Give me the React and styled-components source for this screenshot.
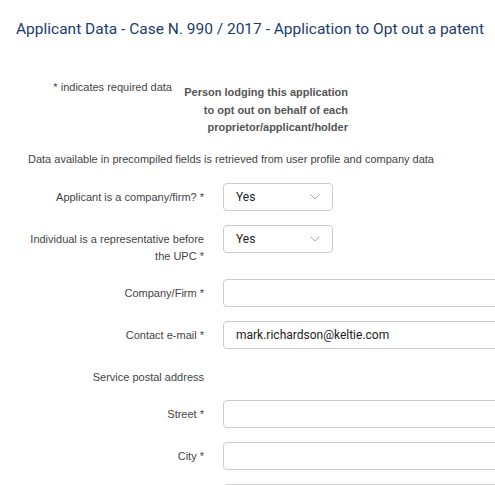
import React from "react";
import styled, { createGlobalStyle } from "styled-components";

const Global = createGlobalStyle`
  html, body {
    margin: 0;
    padding: 0;
    background: #fff;
    overflow: hidden;
  }
  body {
    font-family: "Liberation Sans", Arial, sans-serif;
  }
`;

const Page = styled.div`
  width: 720px;
  padding: 20px 0 0 16px;
`;

const Title = styled.h1`
  margin: 0;
  font-family: Roboto, "Liberation Sans", sans-serif;
  font-weight: 400;
  font-size: 15.5px;
  line-height: 19px;
  color: #1b3c6c;
`;

const Form = styled.div`
  padding: 41px 0 0 12px;
`;

const Intro = styled.div`
  display: flex;
  gap: 12px;
`;

const Note = styled.div`
  width: 144px;
  text-align: right;
  font-size: 11px;
  line-height: 14px;
  color: #444;
`;

const Lodging = styled.div`
  width: 164px;
  padding-top: 4px;
  text-align: right;
  font-size: 11px;
  font-weight: 700;
  line-height: 17.5px;
  color: #555;
`;

const Info = styled.p`
  margin: 15px 0 17px;
  font-size: 11px;
  line-height: 14px;
  color: #444;
`;

const Row = styled.div`
  display: flex;
  align-items: flex-start;
  gap: 19px;
  margin-bottom: 14px;
`;

const Label = styled.label`
  width: 176px;
  flex: none;
  padding-top: 6px;
  text-align: right;
  font-size: 11px;
  line-height: 17px;
  color: #444;
`;

const Field = styled.div`
  box-sizing: border-box;
  height: 28px;
  width: ${(p) => (p.$short ? "110px" : "420px")};
  border: 1px solid #ccc;
  border-radius: 4px;
  background: #fff;
  display: flex;
  align-items: center;
  justify-content: space-between;
  padding: 0 12px 0 12px;
  font-family: Roboto, "Liberation Sans", sans-serif;
  font-size: 12px;
  color: #222;
`;

const Chevron = () => (
  <svg width="10" height="6" viewBox="0 0 10 6">
    <path d="M0.5 0.5 L5 5 L9.5 0.5" fill="none" stroke="#aaa" strokeWidth="1" />
  </svg>
);

function FormRow({ label, value, select }) {
  return (
    <Row>
      <Label>{label}</Label>
      <Field $short={select}>
        <span>{value}</span>
        {select && <Chevron />}
      </Field>
    </Row>
  );
}

export default function App() {
  return (
    <Page>
      <Global />
      <Title>Applicant Data - Case N. 990 / 2017 - Application to Opt out a patent</Title>
      <Form>
        <Intro>
          <Note>* indicates required data</Note>
          <Lodging>
            Person lodging this application to opt out on behalf of each proprietor/applicant/holder
          </Lodging>
        </Intro>
        <Info>Data available in precompiled fields is retrieved from user profile and company data</Info>
        <FormRow label="Applicant is a company/firm? *" value="Yes" select />
        <FormRow label="Individual is a representative before the UPC *" value="Yes" select />
        <FormRow label="Company/Firm *" />
        <FormRow label="Contact e-mail *" value="mark.richardson@keltie.com" />
        <Row>
          <Label>Service postal address</Label>
        </Row>
        <FormRow label="Street *" />
        <FormRow label="City *" />
        <FormRow label="Postal code *" />
      </Form>
    </Page>
  );
}
